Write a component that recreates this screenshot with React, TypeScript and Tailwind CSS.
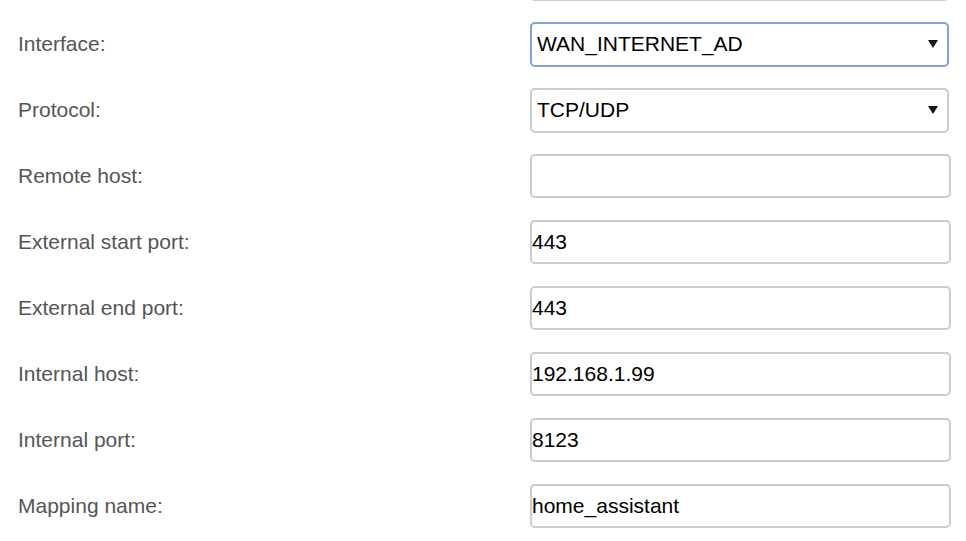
import { type ReactNode } from 'react'

type Field = {
  label: string
  kind: 'select' | 'input'
  value: string
  focused?: boolean
}

const fields: Field[] = [
  { label: 'Interface:', kind: 'select', value: 'WAN_INTERNET_AD', focused: true },
  { label: 'Protocol:', kind: 'select', value: 'TCP/UDP' },
  { label: 'Remote host:', kind: 'input', value: '' },
  { label: 'External start port:', kind: 'input', value: '443' },
  { label: 'External end port:', kind: 'input', value: '443' },
  { label: 'Internal host:', kind: 'input', value: '192.168.1.99' },
  { label: 'Internal port:', kind: 'input', value: '8123' },
  { label: 'Mapping name:', kind: 'input', value: 'home_assistant' },
]

function Row({ label, children }: { label: string; children: ReactNode }) {
  return (
    <div className="flex h-[66px] items-center">
      <div className="w-[530px] shrink-0 pl-[18px] text-[21px] text-[#555555]">{label}</div>
      {children}
    </div>
  )
}

function SelectBox({ value, focused }: { value: string; focused?: boolean }) {
  return (
    <div
      className={
        focused
          ? 'flex h-[45px] w-[419px] items-center justify-between rounded-[5px] border-2 border-[#7ea3da] pl-[5px] pr-[9px] text-[21px] text-black'
          : 'flex h-[45px] w-[419px] items-center justify-between rounded-[5px] border-2 border-[#cccccc] pl-[5px] pr-[9px] text-[21px] text-black'
      }
    >
      <span>{value}</span>
      <svg width="10" height="8" viewBox="0 0 10 8" className="shrink-0">
        <polygon points="0,0 10,0 5,8" fill="#111" />
      </svg>
    </div>
  )
}

function InputBox({ value }: { value: string }) {
  return (
    <div className="flex h-[44px] w-[421px] items-center rounded-[5px] border-2 border-[#cccccc] pl-0 text-[21px] text-black">
      <span>{value}</span>
    </div>
  )
}

export default function App() {
  return (
    <div className="h-[541px] w-[966px] overflow-hidden bg-white font-['Liberation_Sans',Arial,sans-serif]">
      <div className="-mt-[55px]">
        <div className="flex h-[66px] items-center">
          <div className="ml-[530px] h-[45px] w-[419px] rounded-[5px] border-2 border-[#cccccc]" />
        </div>
        {fields.map((f) => (
          <Row key={f.label} label={f.label}>
            {f.kind === 'select' ? (
              <SelectBox value={f.value} focused={f.focused} />
            ) : (
              <InputBox value={f.value} />
            )}
          </Row>
        ))}
      </div>
    </div>
  )
}
